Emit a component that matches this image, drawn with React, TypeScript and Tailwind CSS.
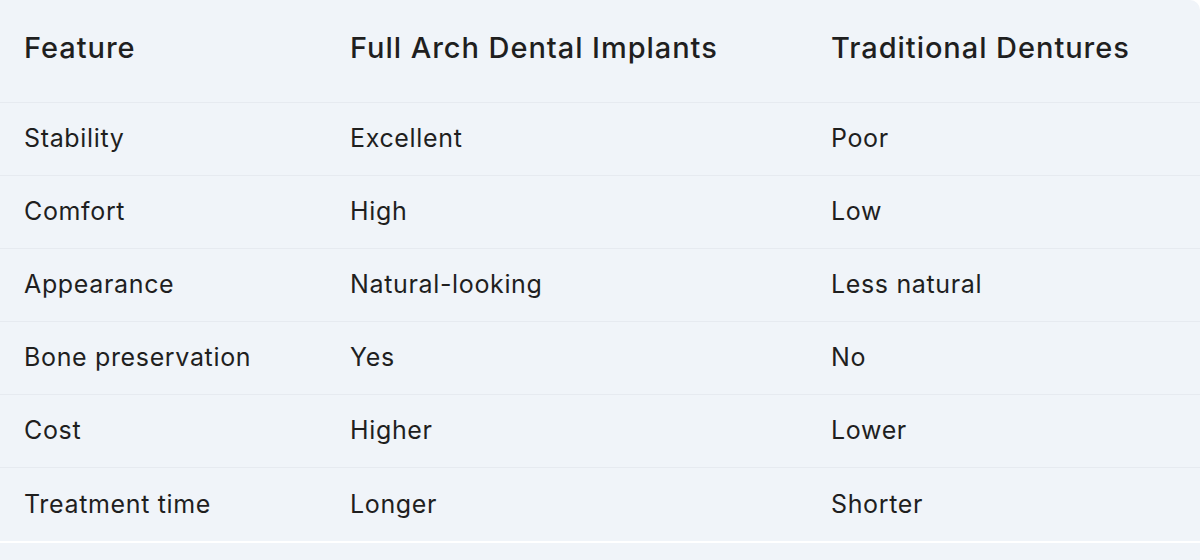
import React from 'react';

interface Row {
  feature: string;
  implants: string;
  dentures: string;
}

const rows: Row[] = [
  { feature: "Stability", implants: "Excellent", dentures: "Poor" },
  { feature: "Comfort", implants: "High", dentures: "Low" },
  { feature: "Appearance", implants: "Natural-looking", dentures: "Less natural" },
  { feature: "Bone preservation", implants: "Yes", dentures: "No" },
  { feature: "Cost", implants: "Higher", dentures: "Lower" },
  { feature: "Treatment time", implants: "Longer", dentures: "Shorter" },
];

const App: React.FC = () => {
  return (
    <div className="w-[1200px] h-[560px] bg-white overflow-hidden font-['Inter','Liberation_Sans',sans-serif] text-[#1f1f1f]">
      {/* Table card */}
      <div className="bg-[#f0f4f9] rounded-tr-[10px]">
        <div className="grid grid-cols-[326px_481px_1fr] h-[103px] items-center pb-[7px] border-b border-[#e6eaf0] text-[29px] font-medium tracking-[0.95px]">
          <div className="pl-6">Feature</div>
          <div className="pl-6">Full Arch Dental Implants</div>
          <div className="pl-6">Traditional Dentures</div>
        </div>

        {rows.map((row, index) => (
          <div
            key={index}
            className={`grid grid-cols-[326px_481px_1fr] h-[73px] items-center text-[25px] tracking-[0.65px] ${index < rows.length - 1 ? 'border-b border-[#e6eaf0]' : ''}`}
          >
            <div className="pl-6">{row.feature}</div>
            <div className="pl-6">{row.implants}</div>
            <div className="pl-6">{row.dentures}</div>
          </div>
        ))}
      </div>

      {/* next block below */}
      <div className="mt-[2px] h-[30px] bg-[#f0f4f9]" />
    </div>
  );
};

export default App;
